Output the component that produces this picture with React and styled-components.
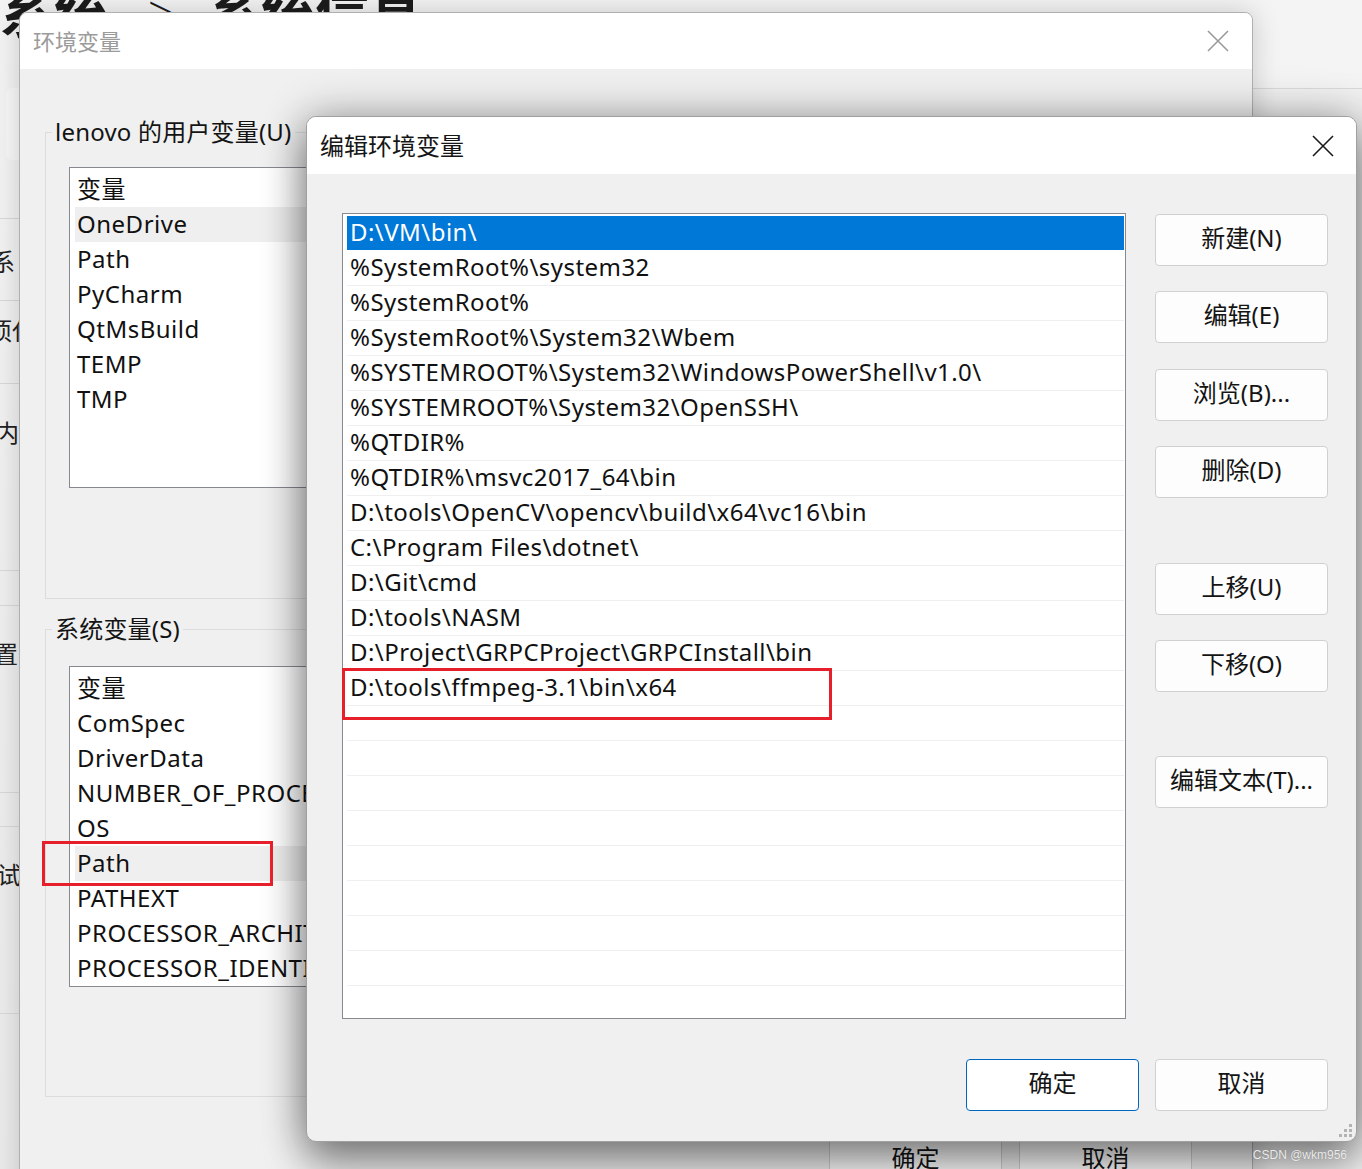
import React from 'react';
import styled, { createGlobalStyle } from 'styled-components';

const GlobalStyle = createGlobalStyle`
    html, body {
        margin: 0;
        padding: 0;
    }
    body {
        font-family: "Noto Sans", "Noto Sans CJK SC", sans-serif;
        background: #ececec;
    }
`;

const Desktop = styled.div`
    position: relative;
    width: 1362px;
    height: 1169px;
    overflow: hidden;
    background: #eeeeee;
`;

// settings app sitting behind both dialogs
const SettingsBack = styled.div`
    position: absolute;
    inset: 0;
    display: flex;
    flex-direction: column;
    background: linear-gradient(#f4f4f4, #ebebeb);
`;

const Breadcrumb = styled.div`
    display: flex;
    align-items: center;
    margin-top: -16px;
    height: 54px;
    line-height: 54px;
    font-family: "Noto Sans CJK SC", sans-serif;
    font-size: 54px;
    font-weight: 600;
    color: #1c1c1c;
    white-space: nowrap;
`;

const Chevron = styled.span`
    font-family: "Noto Sans", sans-serif;
    font-weight: 300;
    font-size: 44px;
    margin: 0 34px 0 40px;
`;

const SettingsBody = styled.div`
    flex: 1;
    display: flex;
`;

const NavStrip = styled.div`
    width: 19px;
    flex-shrink: 0;
    display: flex;
    flex-direction: column;
    overflow: hidden;
`;

const NavItem = styled.div`
    height: ${p => p.$h}px;
    flex-shrink: 0;
    box-sizing: border-box;
    padding-top: ${p => p.$pad || 0}px;
    border-top: ${p => p.$line ? '1px solid #d9d9d9' : 'none'};
    background: ${p => p.$card ? '#f8f8f8' : 'transparent'};
    border-radius: ${p => p.$card ? '6px 0 0 6px' : '0'};
    margin-left: ${p => p.$card ? '6px' : '0'};
    font-family: "Noto Sans CJK SC", sans-serif;
    font-size: 24px;
    line-height: 28px;
    color: #222;
    white-space: nowrap;
    text-indent: ${p => p.$indent || 0}px;
`;

const SettingsMain = styled.div`
    flex: 1;
    padding-top: 50px;
`;

const InfoPanel = styled.div`
    height: 100%;
    border-top: 1px solid #dadada;
    background: #f1f1f1;
`;

// 环境变量 window
const EnvWindow = styled.div`
    position: absolute;
    left: 19px;
    top: 12px;
    width: 1234px;
    height: 1220px;
    box-sizing: border-box;
    display: flex;
    flex-direction: column;
    background: #f0f0f0;
    border: 1px solid #b0b0b0;
    border-radius: 8px 8px 0 0;
    overflow: hidden;
    box-shadow: 0 0 28px rgba(0, 0, 0, 0.18);
`;

const TitleBar = styled.div`
    height: ${p => p.$h}px;
    flex-shrink: 0;
    box-sizing: border-box;
    display: flex;
    align-items: center;
    justify-content: space-between;
    padding: 0 ${p => p.$pr}px 3px ${p => p.$pl}px;
    background: #ffffff;
    font-family: "Noto Sans CJK SC", sans-serif;
    font-size: ${p => p.$fs}px;
    color: ${p => p.$inactive ? '#9b9b9b' : '#161616'};

    svg {
        margin-top: 3px;
    }
`;

const EnvBody = styled.div`
    flex: 1;
    display: flex;
    flex-direction: column;
    padding-left: 25px;
`;

const Group = styled.fieldset`
    margin: ${p => p.$mt}px 0 0 0;
    width: 1180px;
    box-sizing: border-box;
    padding: 0 22px ${p => p.$pb}px 23px;
    border: 1px solid #dcdcdc;
    min-width: 0;
`;

const GroupLabel = styled.legend`
    margin-left: -17px;
    padding: 0 3px;
    font-size: 24px;
    line-height: 28px;
    letter-spacing: 0.2px;
    color: #141414;
`;

const VarList = styled.div`
    margin-top: ${p => p.$mt}px;
    height: 321px;
    box-sizing: border-box;
    padding: 4px 5px;
    background: #ffffff;
    border: 1px solid #86898f;
    overflow: hidden;
`;

const VarRow = styled.div`
    height: 35px;
    line-height: 34px;
    padding-left: 2px;
    font-size: 24px;
    letter-spacing: 0.5px;
    color: #111;
    white-space: nowrap;
    background: ${p => p.$selected ? '#efefef' : 'transparent'};
`;

const EnvFooter = styled.div`
    display: flex;
    justify-content: flex-end;
    gap: 17px;
    margin-top: 37px;
    padding-right: 60px;
`;

// 编辑环境变量 dialog
const EditDialog = styled.div`
    position: absolute;
    left: 306px;
    top: 116px;
    width: 1051px;
    height: 1026px;
    box-sizing: border-box;
    display: flex;
    flex-direction: column;
    background: #f0f0f0;
    border: 1px solid #a0a0a0;
    border-radius: 10px;
    overflow: hidden;
    box-shadow: 0 0 44px rgba(0, 0, 0, 0.32), 0 22px 40px rgba(0, 0, 0, 0.38);
`;

const EditBody = styled.div`
    position: relative;
    flex: 1;
    display: flex;
    flex-direction: column;
    padding: 39px 28px 0 35px;
`;

const EditTop = styled.div`
    display: flex;
    gap: 29px;
`;

const PathList = styled.div`
    width: 784px;
    height: 806px;
    flex-shrink: 0;
    box-sizing: border-box;
    padding: 2px 1px 0 4px;
    background: #ffffff;
    border: 1px solid #86898f;
    overflow: hidden;
`;

const PathRow = styled.div`
    height: 35px;
    box-sizing: border-box;
    line-height: 32px;
    padding-left: 3px;
    font-size: 24px;
    letter-spacing: 0.45px;
    white-space: nowrap;
    color: ${p => p.$selected ? '#ffffff' : '#111111'};
    background: ${p => p.$selected ? '#0078d7' : 'transparent'};
    border-bottom: 1px solid ${p => p.$selected ? '#ffffff' : '#efefef'};
`;

const ButtonColumn = styled.div`
    display: flex;
    flex-direction: column;
    padding-top: 1px;
`;

const WinButton = styled.button`
    width: 173px;
    height: 52px;
    margin-top: ${p => p.$mt || 0}px;
    box-sizing: border-box;
    background: ${p => p.$primary ? '#ffffff' : '#fdfdfd'};
    border: 1px solid ${p => p.$primary ? '#0067c0' : '#d0d0d0'};
    border-radius: 4px;
    font-family: "Noto Sans", "Noto Sans CJK SC", sans-serif;
    font-size: 24px;
    line-height: 28px;
    color: #141414;
    padding: 0 0 5px;
    cursor: default;
`;

const EditFooter = styled.div`
    display: flex;
    justify-content: flex-end;
    gap: 16px;
    margin-top: 40px;
`;

const ResizeGrip = styled.svg`
    position: absolute;
    right: 4px;
    bottom: 4px;
`;

const Highlight = styled.div`
    position: absolute;
    left: ${p => p.$x}px;
    top: ${p => p.$y}px;
    width: ${p => p.$w}px;
    height: ${p => p.$h}px;
    box-sizing: border-box;
    border: 3px solid #e61f2a;
`;

const Watermark = styled.div`
    position: absolute;
    right: 15px;
    bottom: 7px;
    font-family: "Liberation Sans", sans-serif;
    font-size: 12px;
    color: #ececec;
    text-shadow: 0 0 1px rgba(0, 0, 0, 0.25);
`;

const CloseIcon = ({ color }) => (
    <svg width="22" height="22" viewBox="0 0 22 22">
        <path d="M1 1 L21 21 M21 1 L1 21" stroke={color} strokeWidth="1.6" fill="none" />
    </svg>
);

const navItems = [
    { h: 50 },
    { h: 72, card: true },
    { h: 58 },
    { h: 82, line: true, pad: 28, text: '系', indent: -9 },
    { h: 83, line: true, pad: 15, text: '项代', indent: -12 },
    { h: 187, line: true, pad: 34, text: '内', indent: -5 },
    { h: 35, line: true },
    { h: 187, line: true, pad: 33, text: '置', indent: -6 },
    { h: 34, line: true },
    { h: 187, line: true, pad: 33, text: '试', indent: -3 },
    { h: 200, line: true },
];

const userVars = ['OneDrive', 'Path', 'PyCharm', 'QtMsBuild', 'TEMP', 'TMP'];
const systemVars = ['ComSpec', 'DriverData', 'NUMBER_OF_PROCESSORS', 'OS', 'Path', 'PATHEXT', 'PROCESSOR_ARCHITECTURE', 'PROCESSOR_IDENTIFIER'];

const paths = [
    'D:\\VM\\bin\\',
    '%SystemRoot%\\system32',
    '%SystemRoot%',
    '%SystemRoot%\\System32\\Wbem',
    '%SYSTEMROOT%\\System32\\WindowsPowerShell\\v1.0\\',
    '%SYSTEMROOT%\\System32\\OpenSSH\\',
    '%QTDIR%',
    '%QTDIR%\\msvc2017_64\\bin',
    'D:\\tools\\OpenCV\\opencv\\build\\x64\\vc16\\bin',
    'C:\\Program Files\\dotnet\\',
    'D:\\Git\\cmd',
    'D:\\tools\\NASM',
    'D:\\Project\\GRPCProject\\GRPCInstall\\bin',
    'D:\\tools\\ffmpeg-3.1\\bin\\x64',
];

const emptyRows = Array.from({ length: 9 }, () => '');

const sideButtons = [
    { label: '新建(N)', mt: 0 },
    { label: '编辑(E)', mt: 25 },
    { label: '浏览(B)...', mt: 26 },
    { label: '删除(D)', mt: 25 },
    { label: '上移(U)', mt: 65 },
    { label: '下移(O)', mt: 25 },
    { label: '编辑文本(T)...', mt: 64 },
];

const App = () => {
    return (
        <Desktop>
            <GlobalStyle />
            <SettingsBack>
                <Breadcrumb>
                    <span>系统</span>
                    <Chevron>&gt;</Chevron>
                    <span>系统信息</span>
                </Breadcrumb>
                <SettingsBody>
                    <NavStrip>
                        {navItems.map((n, i) => (
                            <NavItem key={i} $h={n.h} $card={n.card} $line={n.line} $pad={n.pad} $indent={n.indent}>
                                {n.text}
                            </NavItem>
                        ))}
                    </NavStrip>
                    <SettingsMain>
                        <InfoPanel />
                    </SettingsMain>
                </SettingsBody>
            </SettingsBack>

            <EnvWindow>
                <TitleBar $h={56} $pl={13} $pr={23} $fs={22} $inactive>
                    <span>环境变量</span>
                    <CloseIcon color="#9a9a9a" />
                </TitleBar>
                <EnvBody>
                    <Group $mt={49} $pb={110}>
                        <GroupLabel>lenovo 的用户变量(U)</GroupLabel>
                        <VarList $mt={21}>
                            <VarRow>变量</VarRow>
                            {userVars.map((v, i) => (
                                <VarRow key={v} $selected={i === 0}>{v}</VarRow>
                            ))}
                        </VarList>
                    </Group>
                    <Group $mt={16} $pb={109}>
                        <GroupLabel>系统变量(S)</GroupLabel>
                        <VarList $mt={23}>
                            <VarRow>变量</VarRow>
                            {systemVars.map((v, i) => (
                                <VarRow key={v} $selected={i === 4}>{v}</VarRow>
                            ))}
                        </VarList>
                    </Group>
                    <EnvFooter>
                        <WinButton>确定</WinButton>
                        <WinButton>取消</WinButton>
                    </EnvFooter>
                </EnvBody>
            </EnvWindow>

            <EditDialog>
                <TitleBar $h={57} $pl={13} $pr={22} $fs={24}>
                    <span>编辑环境变量</span>
                    <CloseIcon color="#1a1a1a" />
                </TitleBar>
                <EditBody>
                    <EditTop>
                        <PathList>
                            {paths.map((p, i) => (
                                <PathRow key={i} $selected={i === 0}>{p}</PathRow>
                            ))}
                            {emptyRows.map((p, i) => (
                                <PathRow key={'e' + i} />
                            ))}
                        </PathList>
                        <ButtonColumn>
                            {sideButtons.map(b => (
                                <WinButton key={b.label} $mt={b.mt}>{b.label}</WinButton>
                            ))}
                        </ButtonColumn>
                    </EditTop>
                    <EditFooter>
                        <WinButton $primary>确定</WinButton>
                        <WinButton>取消</WinButton>
                    </EditFooter>
                    <ResizeGrip width="14" height="14" viewBox="0 0 14 14">
                        <g fill="#b3b3b3">
                            <rect x="11" y="1" width="3" height="3" />
                            <rect x="6" y="6" width="3" height="3" />
                            <rect x="11" y="6" width="3" height="3" />
                            <rect x="1" y="11" width="3" height="3" />
                            <rect x="6" y="11" width="3" height="3" />
                            <rect x="11" y="11" width="3" height="3" />
                        </g>
                    </ResizeGrip>
                </EditBody>
            </EditDialog>

            <Highlight $x={42} $y={841} $w={231} $h={45} />
            <Highlight $x={342} $y={668} $w={490} $h={52} />
            <Watermark>CSDN @wkm956</Watermark>
        </Desktop>
    );
};

export default App;
